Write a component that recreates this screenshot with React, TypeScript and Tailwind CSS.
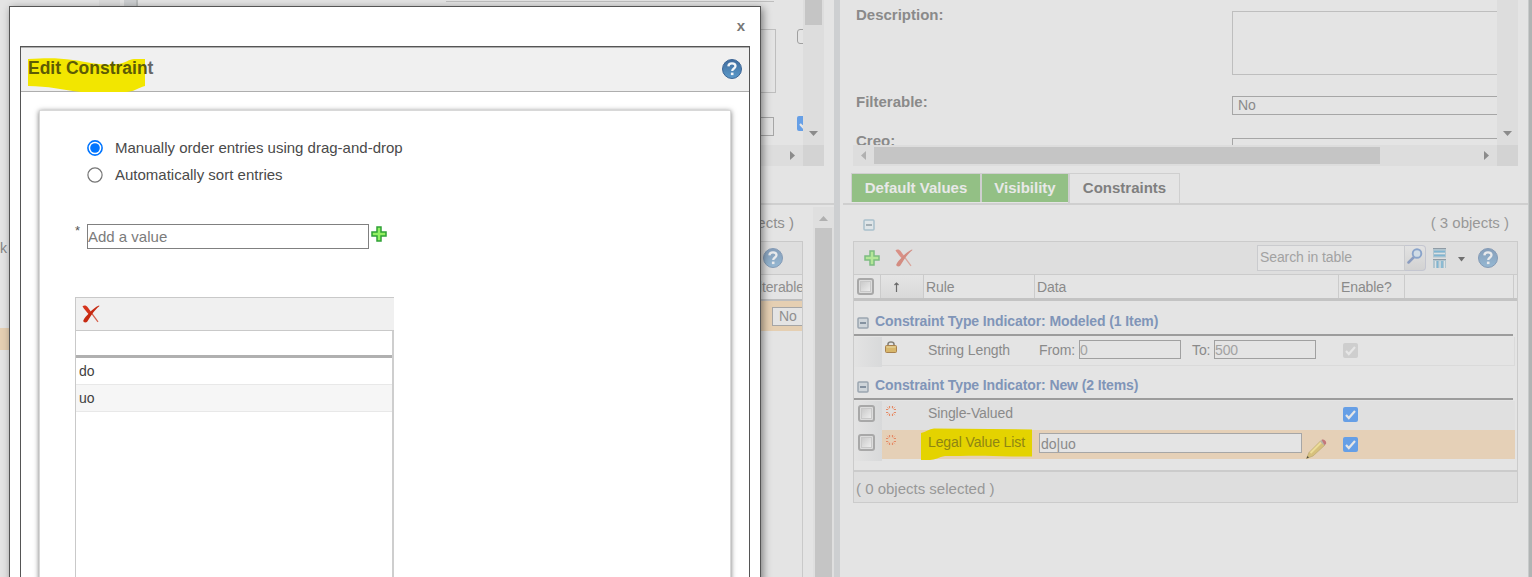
import type { ReactNode } from "react"
import clsx from "clsx"

function HelpIcon({ faded = false }: { faded?: boolean }) {
  return (
    <svg width="20" height="20" viewBox="0 0 20 20" className={clsx("shrink-0", faded && "opacity-55")}>
      <defs>
        <linearGradient id="help" x1="0" y1="0" x2="0" y2="1">
          <stop offset="0" stopColor="#3f6b9d" />
          <stop offset="1" stopColor="#5b9aca" />
        </linearGradient>
      </defs>
      <circle cx="10" cy="10" r="9.5" fill="url(#help)" stroke="#3c6595" />
      <path d="M6.4 7.4C6.500 5.200 8 4.300 10 4.300c2.100 0 3.500 1.100 3.500 2.800 0 2.400-3.200 2.300-3.300 4.900" fill="none" stroke="#f2f5f8" strokeWidth="2.3" />
      <rect x="8.9" y="13.6" width="2.6" height="2.5" fill="#f2f5f8" />
    </svg>
  )
}

function PlusIcon({ faded = false }: { faded?: boolean }) {
  return (
    <svg width="16" height="16" viewBox="0 0 16 16" className={clsx("shrink-0", faded && "opacity-55")}>
      <path d="M6 1h4v5h5v4h-5v5H6v-5H1V6h5z" fill="#93f062" stroke="#2fa136" strokeWidth="1.5" />
    </svg>
  )
}

function DeleteIcon({ faded = false }: { faded?: boolean }) {
  return (
    <svg width="18" height="18" viewBox="0 0 18 18" className={clsx("shrink-0", faded && "opacity-45")}>
      <path d="M.5 1.300C2 0 4.300.2 5.700 2.200L9 6.800l-2 2.700C5 7.500 2 4 .5 1.300z" fill="#d5341c" />
      <path d="M7.500 6.500 9.500 7 16.500 16.500l-1 .7z" fill="#d5604c" />
      <path d="M17.500 1C14.500 3.500 12.500 5.800 10.500 8.500 8 12 6.500 15 5 17c-1.500 1-4 .5-3.700-1.500C2 13 5 10.500 7 8.200 10 4.800 13.500 2 17 .5z" fill="#c62a12" />
    </svg>
  )
}

function CollapseIcon({ dark = false }: { dark?: boolean }) {
  return (
    <svg width="12" height="12" viewBox="0 0 12 12" className="shrink-0">
      <rect x="1" y="1" width="10" height="10" rx="1" fill={dark ? "#cfd5da" : "#dfe5e8"} stroke={dark ? "#9aa5b0" : "#a9c0cc"} strokeWidth="1.5" />
      <path d="M3 6h6" stroke={dark ? "#53657a" : "#7d8a93"} strokeWidth="1.2" />
    </svg>
  )
}

function NewIcon() {
  return (
    <svg width="10" height="10" viewBox="0 0 10 10" className="shrink-0">
      <path d="M3.500 0v2.200M6.500 0v2.200M3.500 7.800V10M6.500 7.800V10M0 3.500h2.200M0 6.500h2.200M7.800 3.500H10M7.800 6.500H10" stroke="#e58a66" strokeWidth="1.2" />
      <path d="m.8.8 2 2M9.200.8l-2 2M.8 9.200l2-2M9.200 9.200l-2-2" stroke="#e6b096" />
    </svg>
  )
}

function LockIcon() {
  return (
    <svg width="12" height="12" viewBox="0 0 12 12" className="shrink-0">
      <path d="M3 6V3.200C3 .3 9 .3 9 3.200V6" fill="none" stroke="#85827a" strokeWidth="1.6" />
      <rect x=".5" y="4.5" width="11" height="7" rx="1" fill="#d7b66b" stroke="#a8824f" />
      <path d="M1.500 6h9" stroke="#e8d9a8" />
    </svg>
  )
}

function PencilIcon() {
  return (
    <svg width="21" height="21" viewBox="0 0 21 21" className="shrink-0">
      <path d="M.5 20.500 3 14.500 14.500 3l4.500 4L7 18z" fill="#d6c07c" stroke="#b5a26c" strokeWidth=".6" />
      <path d="M4.500 15 15.500 4" stroke="#ecdc99" strokeWidth="2" />
      <path d="M14 3.500 16 1.600l4 3.600-2 2.300z" fill="#b9b5a9" />
      <path d="M15.700 2c1-1.500 5.500.5 4.300 4l-1.500 1z" fill="#c4777a" />
      <path d="m.5 20.500 1-2.500 1.500 1.500z" fill="#4d4839" />
    </svg>
  )
}

function SearchIcon() {
  return (
    <svg width="16" height="16" viewBox="0 0 16 16">
      <path d="M1.500 14.500 7 9" stroke="#8b9dc0" strokeWidth="2.5" strokeLinecap="round" />
      <circle cx="10" cy="5.5" r="4.3" fill="#d0dce6" stroke="#8aa4ca" strokeWidth="1.9" />
    </svg>
  )
}

function ViewIcon() {
  return (
    <svg width="13" height="20" viewBox="0 0 13 20" className="shrink-0">
      <path d="M0 0h13v9.500H0zM0 11h13v9H0z" fill="#b1c5cf" />
      <path d="M0 .5h13M0 11.500h13" stroke="#8f9ba5" />
      <path d="M1 3.500h11M1 7.500h11M4.500 13v7M9 13v7" stroke="#7fb6d3" strokeWidth="1.5" />
      <path d="M1 5.500h11M2.500 13v7M7 13v7M11.500 13v7" stroke="#dbe2e5" />
    </svg>
  )
}

function Arrow({ dir, light = false }: { dir: "up" | "down" | "left" | "right"; light?: boolean }) {
  const paths = {
    up: "M0 5h9L4.500 0z",
    down: "M0 0h9L4.500 5z",
    left: "M5 0v9L0 4.500z",
    right: "M0 0v9l5-4.500z",
  }
  const flat = dir === "up" || dir === "down"
  return (
    <svg width={flat ? 9 : 5} height={flat ? 5 : 9} className="shrink-0">
      <path d={paths[dir]} fill={light ? "#b0b0b0" : "#8b8b8b"} />
    </svg>
  )
}

function Tick({ disabled = false }: { disabled?: boolean }) {
  return (
    <svg width="15" height="15" viewBox="0 0 15 15" className="shrink-0">
      <rect width="15" height="15" rx="2" fill={disabled ? "#cecece" : "#669fe6"} />
      <path d="m3 8 2.800 3L12 4" fill="none" stroke="#e6e6e6" strokeWidth="2.2" />
    </svg>
  )
}

function SelectBox() {
  return (
    <div className="flex size-[17px] shrink-0 items-center justify-center rounded-[3px] border-2 border-[#a8a8a8] bg-[#dcdcdc]">
      <div className="size-[11px] border border-[#c8c8c8] bg-linear-to-br from-[#cbcbcb] to-[#ececec]" />
    </div>
  )
}

function Handle({ children }: { children?: ReactNode }) {
  return (
    <div className="flex w-7 shrink-0 justify-start bg-linear-to-r from-[#e3e3e3] to-[#d8d9da] pt-1 pl-1">
      {children}
    </div>
  )
}

function GroupTitle({ children }: { children: ReactNode }) {
  return (
    <div className="mr-1 flex h-[25px] items-center gap-[6px] border-b-2 border-[#9c9c9c] pl-[3px] text-sm font-bold tracking-[-0.1px] text-[#8095b8]">
      <CollapseIcon dark />
      <span className="-mt-1 whitespace-nowrap">{children}</span>
    </div>
  )
}

function LeftPane() {
  return (
    <div className="flex w-[834px] shrink-0">
      <div className="w-[99px] pt-[240px]">
        <div className="h-[88px] text-sm leading-4 text-[#858585]">k</div>
        <div className="h-[22px] bg-[#e5cfb2]" />
      </div>
      <div className="mr-1 w-[21px] bg-[#dcdcdc]" />
      <div className="w-[14px] border-r-2 border-[#b9bcbc] bg-[#cdcfd1]" />
      <div className="flex min-w-0 flex-1 flex-col">
        <div className="flex h-[145px] justify-end pr-[10px]">
          <div className="w-[351px]">
            <div className="h-[2px] w-[328px] border-b border-[#bebebe]" />
            <div className="mt-[27px] h-16 w-[330px] border border-[#bebebe]" />
            <div className="mt-6 h-[19px] w-[328px] border border-[#a6a6a6]" />
          </div>
          <div className="flex w-[6px] flex-col overflow-hidden pt-[29px]">
            <div className="size-[15px] shrink-0 rounded-[3px] border border-[#a0a0a0]" />
            <div className="h-[72px] shrink-0" />
            <Tick />
          </div>
          <div className="flex w-[21px] flex-col items-center justify-between bg-[#dddddd] pb-[9px]">
            <div className="h-[25px] w-[17px] bg-[#c5c5c5]" />
            <Arrow dir="down" />
          </div>
        </div>
        <div className="flex h-[21px] pr-[10px]">
          <div className="flex flex-1 items-center justify-end bg-[#dddddd] pr-2">
            <Arrow dir="right" />
          </div>
          <div className="w-[21px] bg-[#d3d3d3]" />
        </div>
        <div className="h-[39px] border-b-2 border-[#cfcfcf]" />
        <div className="flex flex-1 pt-[2px]">
          <div className="flex-1 pr-[10px] text-[15px] text-[#8f8f8f]">
            <div className="pt-[5px] pr-[9px] text-right leading-[22px]">( 1 objects )</div>
            <div className="mt-[7px] h-[336px] border-t border-r border-[#c9c9c9]">
              <div className="flex h-[33px] items-center justify-end border-b border-[#c9c9c9] bg-[#dedede] pr-[19px]">
                <HelpIcon faded />
              </div>
              <div className="flex h-[26px] items-center justify-end overflow-hidden border-b-2 border-[#bdbdbd] text-sm tracking-[-0.1px]">
                <span className="-mr-[2px]">Filterable</span>
              </div>
              <div className="flex h-[30px] items-center justify-end bg-[#e5cfb2]">
                <div className="h-[19px] w-[30px] border border-r-0 border-[#a6a6a6] bg-[#e4e4e4] pl-[6px] text-sm leading-[17px]">No</div>
              </div>
            </div>
          </div>
          <div className="flex w-[21px] flex-col items-center bg-[#dfdfdf] pt-[9px]">
            <Arrow dir="up" light />
            <div className="mt-[7px] w-[17px] flex-1 bg-[#c5c5c5]" />
          </div>
        </div>
      </div>
    </div>
  )
}

function AttributeForm() {
  return (
    <div className="pl-[13px]">
      <div className="flex h-[145px]">
        <div className="h-[145px] w-[644px] overflow-hidden text-[15px] font-bold text-[#8a8a8a]">
          <div className="flex h-[91px] pt-[5px] pl-[3px]">
            <div className="w-[376px] leading-5">Description:</div>
            <div className="mt-[6px] h-16 flex-1 border border-r-0 border-[#bebebe]" />
          </div>
          <div className="flex h-[39px] pt-[1px] pl-[3px]">
            <div className="w-[376px] leading-5">Filterable:</div>
            <div className="mt-1 h-[19px] flex-1 border border-r-0 border-[#a6a6a6] pl-[5px] text-sm leading-[17px] font-normal">No</div>
          </div>
          <div className="flex pt-[1px] pl-[3px]">
            <div className="w-[376px] leading-5">Creo:</div>
            <div className="mt-[7px] h-[19px] flex-1 border border-r-0 border-[#a6a6a6]" />
          </div>
        </div>
        <div className="flex w-[21px] flex-col items-center justify-end bg-[#dddddd] pb-[9px]">
          <Arrow dir="down" />
        </div>
      </div>
      <div className="flex h-[21px]">
        <div className="flex w-[644px] items-center bg-[#dddddd] pl-2">
          <Arrow dir="left" light />
          <div className="ml-2 h-[17px] w-[506px] bg-[#c5c5c5]" />
          <div className="ml-[104px]">
            <Arrow dir="right" />
          </div>
        </div>
        <div className="w-[21px] bg-[#d3d3d3]" />
      </div>
    </div>
  )
}

function Tabs() {
  return (
    <div className="ml-[3px] flex h-[39px] items-end border-b-2 border-[#cfcfcf] pl-2 text-[15px] font-bold">
      <div className="mb-[1px] flex h-[29px] w-[129px] items-center justify-center border-t border-l border-[#cfcfcf] bg-[#93c085] text-[#e8e8e8]">Default Values</div>
      <div className="mb-[1px] flex h-[29px] w-[88px] items-center justify-center border-t border-l-2 border-[#cfcfcf] bg-[#93c085] text-[#e8e8e8]">Visibility</div>
      <div className="flex h-[30px] w-28 items-center justify-center border border-b-0 border-l-2 border-[#cfcfcf] pb-[2px] text-[#7f7f7f]">Constraints</div>
    </div>
  )
}

function Toolbar() {
  return (
    <div className="flex h-[33px] items-center border-b border-[#cbcbcb] bg-[#dedede] pl-[10px]">
      <PlusIcon faded />
      <div className="ml-[15px]">
        <DeleteIcon faded />
      </div>
      <div className="ml-[344px] flex h-[26px] w-[148px] items-center border border-[#cacbce] bg-[#e4e4e4] pb-[2px] pl-[2px] text-sm tracking-[-0.1px] text-[#a2a2a2]">Search in table</div>
      <div className="flex h-[26px] w-[21px] items-center justify-center rounded-r-sm border border-l-0 border-[#c4c6d0] bg-linear-to-b from-[#e2e2e2] to-[#d2d2d2] pb-1">
        <SearchIcon />
      </div>
      <div className="ml-[7px]">
        <ViewIcon />
      </div>
      <svg width="7" height="5" className="mt-[2px] ml-3">
        <path d="M0 0h7L3.500 4.500z" fill="#6f6f6f" />
      </svg>
      <div className="ml-[13px]">
        <HelpIcon faded />
      </div>
    </div>
  )
}

function HeaderRow() {
  return (
    <div className="flex h-[26px] border-b-[3px] border-[#c3c3c3] text-sm tracking-[-0.1px] text-[#8a8a8a]">
      <div className="flex w-[27px] items-center border-r border-[#cbcbcb] pl-[3px]">
        <SelectBox />
      </div>
      <div className="flex w-[43px] items-center justify-center border-r border-[#cbcbcb] bg-linear-to-b from-[#e4e4e4] to-[#d9d9d9] pr-3">
        <svg width="5" height="10">
          <path d="M2.500 10V1M.5 3l2-2 2 2" fill="none" stroke="#6a6a6a" strokeWidth="1.2" />
        </svg>
      </div>
      <div className="flex w-[111px] items-center border-r border-[#cbcbcb] pl-[2px]">Rule</div>
      <div className="flex w-[304px] items-center border-r border-[#cbcbcb] pl-[2px]">Data</div>
      <div className="flex w-[66px] items-center border-r border-[#cbcbcb] pl-[2px]">Enable?</div>
      <div className="w-[109px] border-r border-[#cbcbcb]" />
    </div>
  )
}

function ConstraintTable() {
  return (
    <div className="mt-[7px] ml-[13px] h-[262px] w-[665px] border border-[#cbcbcb]">
      <Toolbar />
      <HeaderRow />
      <div className="pt-[10px]">
        <GroupTitle>Constraint Type Indicator: Modeled (1 Item)</GroupTitle>
      </div>
      <div className="mt-[1px] mr-[2px] flex h-[29px] border-r border-b border-[#dadada] text-sm tracking-[-0.1px] text-[#8a8a8a]">
        <div className="-mb-[2px] flex">
          <Handle />
        </div>
        <div className="w-[46px] pt-1 pl-[3px]">
          <LockIcon />
        </div>
        <div className="w-[111px] leading-[26px]">String Length</div>
        <div className="flex leading-[26px]">
          <span className="w-10">From:</span>
          <div className="mt-[3px] h-[19px] w-[102px] border border-[#a0a0a0] leading-[19px] text-[#a2a2a2]">0</div>
          <span className="ml-[11px] w-[22px]">To:</span>
          <div className="mt-[3px] h-[19px] w-[102px] border border-[#a0a0a0] leading-[19px] text-[#a2a2a2]">500</div>
        </div>
        <div className="ml-[27px] pt-[6px]">
          <Tick disabled />
        </div>
      </div>
      <div className="pt-[9px]">
        <GroupTitle>Constraint Type Indicator: New (2 Items)</GroupTitle>
      </div>
      <div className="mt-[1px] mr-[2px] flex h-[29px] bg-[#e0e0e0] text-sm tracking-[-0.1px] text-[#8a8a8a]">
        <Handle>
          <SelectBox />
        </Handle>
        <div className="w-[46px] pt-[5px] pl-1">
          <NewIcon />
        </div>
        <div className="w-[415px] leading-[25px]">Single-Valued</div>
        <div className="pt-[6px]">
          <Tick />
        </div>
      </div>
      <div className="mr-[2px] flex h-[29px] bg-[#e5d0b7] text-sm">
        <div className="-mb-[2px] flex">
          <Handle>
            <SelectBox />
          </Handle>
        </div>
        <div className="w-[46px] pt-[5px] pl-1">
          <NewIcon />
        </div>
        <div className="relative w-[111px] leading-[25px] tracking-[-0.1px] text-[#8e8514]">
          {/* marker stroke behind the rule name */}
          <svg width="112" height="32" className="absolute -top-[2px] -left-[7px]">
            <path d="M0 5C5 4 8 1 13 .5L111 1.500V28.500H91C60 27 40 28 24 28 18 29 14 32 9 32H0z" fill="#e4d300" />
          </svg>
          <span className="relative">Legal Value List</span>
        </div>
        <div className="mt-[3px] h-5 w-[263px] border border-[#a6a6a6] bg-[#e4e4e4] pl-[1px] leading-5 text-[#8a8a8a]">do|uo</div>
        <div className="ml-1 w-[37px] pt-2">
          <PencilIcon />
        </div>
        <div className="pt-[7px]">
          <Tick />
        </div>
      </div>
      <div className="mt-[11px] h-8 border-t-2 border-[#cbcbcb] bg-[#dedede] pl-[2px] text-[15px] leading-[34px] text-[#989898]">( 0 objects selected )</div>
    </div>
  )
}

function RightPane() {
  return (
    <div className="w-[688px] shrink-0">
      <AttributeForm />
      <Tabs />
      <div className="flex h-[29px] items-center justify-between pt-[10px] pr-[19px] pl-[23px] text-[15px] text-[#989898]">
        <CollapseIcon />
        <span className="-mt-1">( 3 objects )</span>
      </div>
      <ConstraintTable />
    </div>
  )
}

function Radio({ checked = false, label }: { checked?: boolean; label: string }) {
  return (
    <div className="flex h-[27px] items-center gap-3 text-[15px] text-[#4a4a4a]">
      <svg width="16" height="16">
        <circle cx="8" cy="8" r="7.1" fill="#fff" stroke={checked ? "#0075ff" : "#767676"} strokeWidth={checked ? 1.6 : 1.2} />
        {checked && <circle cx="8" cy="8" r="4.8" fill="#0075ff" />}
      </svg>
      <span className="whitespace-nowrap">{label}</span>
    </div>
  )
}

function ValueList({ values }: { values: string[] }) {
  return (
    <div className="mt-12 h-[330px] w-[319px] border-t border-l border-[#c9c9c9] text-sm text-[#3f3f3f]">
      <div className="flex h-[33px] items-center border-b border-[#c9c9c9] bg-[#f0f0f0] pl-[6px]">
        <DeleteIcon />
      </div>
      <div className="h-[296px] border-r-2 border-[#cecece]">
        <div className="h-[27px] border-b-[3px] border-[#b0b0b0]" />
        {values.map((value, i) => (
          <div key={value} className={clsx("h-[27px] border-b border-[#e8e8e8] pl-[3px] leading-[26px]", i % 2 === 1 && "bg-[#f6f6f6]")}>{value}</div>
        ))}
      </div>
    </div>
  )
}

function EditDialog() {
  return (
    <div className="absolute top-[6px] left-[9px] h-[600px] w-[752px] border border-[#555] bg-white px-[10px] shadow-[2px_2px_8px_rgba(0,0,0,0.45)]">
      <div className="h-[39px] pt-[9px] pr-[5px] text-right text-[15px] font-bold text-[#777]">x</div>
      <div className="h-[560px] border border-[#555]">
        <div className="flex h-[45px] items-center justify-between border-t border-b border-[#aeaeae] bg-[#f0f0f0] pr-[7px] pl-[7px]">
          <div className="relative pb-1 text-[17.5px] font-bold text-[#666]">
            {/* marker stroke behind the title */}
            <svg width="118" height="35" className="absolute top-0 left-0">
              <path d="M0 1C20 0 30 0 45 2 65 5 75 8 90 6 98 5 101 1 106 1H117V28C110 30 105 34 98 34H53C35 32 20 28 0 28z" fill="#f2e600" />
            </svg>
            <span className="relative">
              <span className="text-[#5c5b05]">Edit Constrain</span>t
            </span>
          </div>
          <div className="mb-[2px]">
            <HelpIcon />
          </div>
        </div>
        <div className="mx-[18px] mt-[18px] h-[490px] border border-[#d8d8d8] bg-white pt-[23px] pl-[35px] shadow-[0_1px_5px_rgba(0,0,0,0.55)]">
          <div className="pl-3">
            <Radio checked label="Manually order entries using drag-and-drop" />
            <Radio label="Automatically sort entries" />
          </div>
          <div className="mt-9 flex h-[25px]">
            <div className="w-3 text-[13px] leading-[14px] text-[#555]">*</div>
            <div className="h-[25px] w-[282px] border border-[#808080] text-[15px] leading-6 text-[#7b7b7b]">Add a value</div>
            <div className="mt-[2px] ml-[2px]">
              <PlusIcon />
            </div>
          </div>
          <ValueList values={["do", "uo"]} />
        </div>
      </div>
    </div>
  )
}

export default function App() {
  return (
    <div className="relative flex h-[577px] w-[1532px] overflow-hidden bg-[#e4e4e4] font-['Liberation_Sans',Arial,sans-serif] leading-5">
      <LeftPane />
      <div className="w-[6px] shrink-0 bg-[#cdcfd1]" />
      <RightPane />
      <div className="w-1 shrink-0 border-l border-[#c8cbcb] bg-[#b1b4b4]" />
      <EditDialog />
    </div>
  )
}
